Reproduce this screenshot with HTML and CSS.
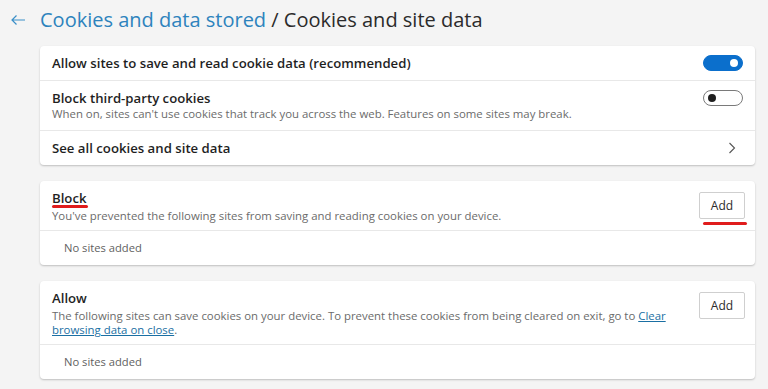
FILE: index.html
```html
<!DOCTYPE html>
<html lang="en">
<head>
  <meta charset="UTF-8">
  <title>Cookies and site data</title>
  <link rel="stylesheet" href="styles.css">
</head>
<body>
  <div class="page">
    <div class="header">
      <span class="back">
        <svg width="16" height="12" viewBox="0 0 16 12"><path d="M15 6H2M6.5 1.5L2 6l4.5 4.5" fill="none" stroke="#3b8fc8" stroke-width="1.2"/></svg>
      </span>
      <h1><span class="crumb">Cookies and data stored</span> / Cookies and site data</h1>
    </div>

    <div class="card">
      <div class="row">
        <div class="row-text">
          <div class="row-title">Allow sites to save and read cookie data (recommended)</div>
        </div>
        <div class="toggle on"></div>
      </div>
      <div class="row tall">
        <div class="row-text">
          <div class="row-title">Block third-party cookies</div>
          <div class="row-desc">When on, sites can't use cookies that track you across the web. Features on some sites may break.</div>
        </div>
        <div class="toggle"></div>
      </div>
      <div class="row">
        <div class="row-text">
          <div class="row-title">See all cookies and site data</div>
        </div>
        <svg class="chevron" width="8" height="12" viewBox="0 0 8 12"><path d="M1.5 1l5 5-5 5" fill="none" stroke="#555" stroke-width="1.1"/></svg>
      </div>
    </div>

    <div class="card">
      <div class="list-head">
        <div class="row-text">
          <div class="row-title"><span class="marked">Block</span></div>
          <div class="row-desc">You've prevented the following sites from saving and reading cookies on your device.</div>
        </div>
        <div class="add-wrap marked-btn"><button class="add">Add</button></div>
      </div>
      <div class="empty">No sites added</div>
    </div>

    <div class="card">
      <div class="list-head">
        <div class="row-text">
          <div class="row-title">Allow</div>
          <div class="row-desc">The following sites can save cookies on your device. To prevent these cookies from being cleared on exit, go to <a href="#">Clear browsing data on close</a>.</div>
        </div>
        <div class="add-wrap"><button class="add">Add</button></div>
      </div>
      <div class="empty">No sites added</div>
    </div>
  </div>
</body>
</html>
```

FILE: styles.css
```css
body {
  margin: 0;
  background-color: #f4f4f4;
  font-family: 'Open Sans', 'Noto Sans', sans-serif;
  color: #222;
}
.page {
  padding: 6px 13px 0 10px;
}
.header {
  display: flex;
  align-items: center;
  height: 26px;
  margin-bottom: 14px;
}
.back {
  width: 30px;
  display: flex;
  align-items: center;
  padding-top: 1px;
}
h1 {
  margin: 0;
  font-size: 20px;
  font-weight: 400;
  color: #2b2b2b;
  white-space: nowrap;
}
.crumb {
  color: #2d83bd;
}
.card {
  margin-left: 30px;
  background-color: #fff;
  border-radius: 4px;
  box-shadow: 0 1px 2px rgba(0, 0, 0, 0.22);
  margin-bottom: 16px;
}
.row {
  display: flex;
  align-items: center;
  min-height: 34px;
  padding: 0 11px 0 12px;
  border-bottom: 1px solid #e8e8e8;
}
.row:last-child {
  border-bottom: none;
}
.row.tall {
  min-height: 49px;
  align-items: flex-start;
}
.row.tall .row-text {
  padding-top: 8px;
}
.row.tall .toggle {
  margin-top: 9px;
}
.row-text {
  flex: 1;
}
.row-title {
  font-size: 13.2px;
  font-weight: 600;
  color: #1f1f1f;
  line-height: 18px;
}
.row-desc {
  font-size: 11.4px;
  color: #6b6b6b;
  line-height: 14px;
}
.row-desc a {
  color: #1a6fa3;
  text-decoration: underline;
}
.toggle {
  width: 38px;
  height: 14px;
  border-radius: 9px;
  border: 1px solid #7a7a7a;
  position: relative;
  margin-right: 1px;
}
.toggle::after {
  content: "";
  position: absolute;
  left: 4px;
  top: 3px;
  width: 8px;
  height: 8px;
  border-radius: 50%;
  background-color: #1f1f1f;
}
.toggle.on {
  background-color: #0b6fcc;
  border-color: #0b6fcc;
}
.toggle.on::after {
  left: auto;
  right: 4px;
  background-color: #fff;
}
.chevron {
  margin-right: 8px;
}
.list-head {
  display: flex;
  align-items: flex-start;
  padding: 8px 10px 7px 12px;
  border-bottom: 1px solid #e8e8e8;
}
.list-head .row-title {
  margin-bottom: 2px;
}
.marked {
  position: relative;
}
.marked::after {
  content: "";
  position: absolute;
  left: 0;
  right: -1px;
  bottom: -1px;
  height: 3px;
  border-radius: 2px;
  background-color: #e01c1c;
}
.add-wrap {
  position: relative;
  margin-left: 24px;
  padding-top: 3px;
}
.marked-btn::after {
  content: "";
  position: absolute;
  left: 4px;
  right: -2px;
  bottom: -6px;
  height: 3px;
  border-radius: 2px;
  background-color: #e01c1c;
}
.add {
  width: 46px;
  height: 27px;
  font-family: 'Open Sans', 'Noto Sans', sans-serif;
  font-size: 12px;
  color: #2b2b2b;
  background-color: #fff;
  border: 1px solid #cfcfcf;
  border-radius: 2px;
  padding: 0;
}
.empty {
  font-size: 11.2px;
  color: #5f5f5f;
  padding: 0 24px;
  height: 34px;
  line-height: 34px;
}
```
